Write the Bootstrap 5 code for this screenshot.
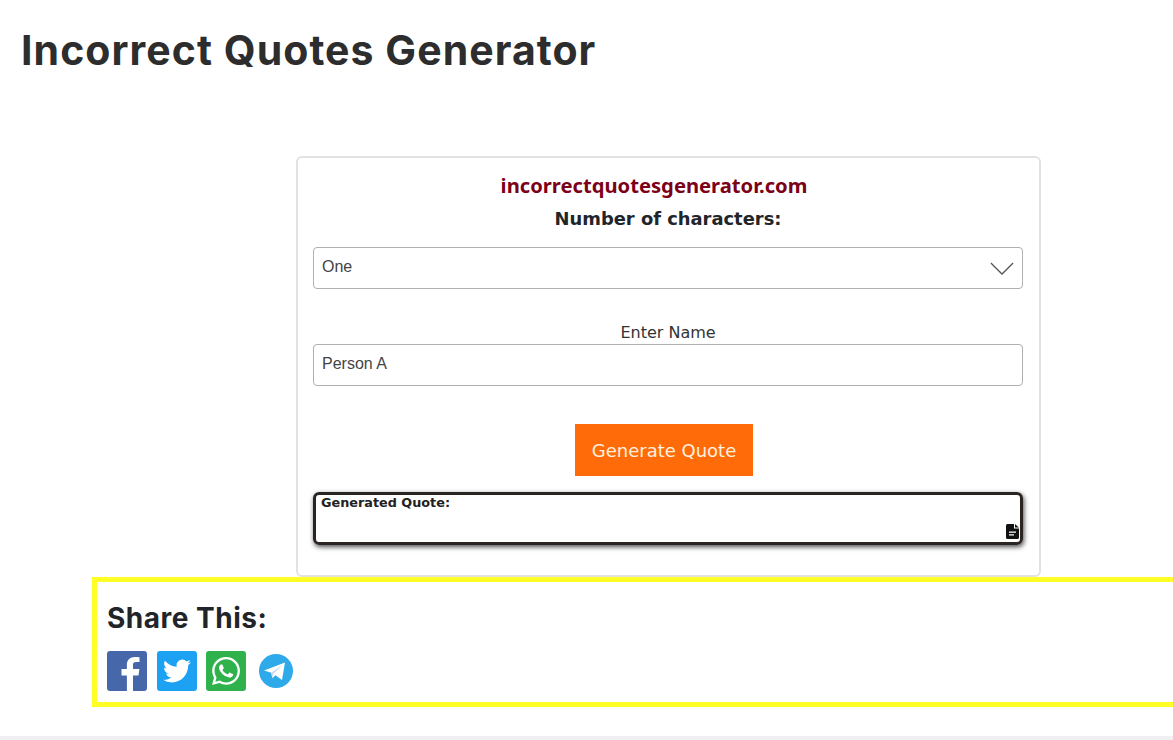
<!DOCTYPE html>
<html lang="en">

<head>
    <meta charset="UTF-8">
    <meta name="viewport" content="width=device-width, initial-scale=1.0">
    <title>Incorrect Quotes Generator</title>
    <link href="https://cdn.jsdelivr.net/npm/bootstrap@5.3.0/dist/css/bootstrap.min.css" rel="stylesheet">
    <style>
        html, body { overflow: hidden; height: 740px; }
        body { font-family: "DejaVu Sans", sans-serif; color: #212529; }
        .page-title { font-family: Inter, sans-serif; font-weight: 700; font-size: 41px; line-height: 48px; color: #2d2d2d; margin: 0; padding: 26px 0 0 21px; letter-spacing: 1.05px; }
        .tool-card { width: 745px; height: 421px; margin: 82px 0 0 296px; border: 2px solid #e2e2e2; border-radius: 6px; padding: 13px 16px 0 15px; }
        .site-name { font-family: "Noto Sans", sans-serif; font-weight: 700; font-size: 20.2px; line-height: 28px; color: #7b0018; padding-right: 28px; }
        .count-label { font-weight: 700; font-size: 17.9px; line-height: 24px; margin-top: 8px; color: #212529; }
        .tool-field { font-family: "Liberation Sans", sans-serif; font-size: 16px; height: 42px; color: #444; border: 1px solid #b0b0b0; border-radius: 4px; padding: 0 8px 3px; }
        .tool-select { margin-top: 16px; background-size: 24px 15px; background-position: right 8px center; background-image: url("data:image/svg+xml,%3Csvg xmlns='http://www.w3.org/2000/svg' viewBox='0 0 26 16'%3E%3Cpath d='M1 2l12 12L25 2' fill='none' stroke='%23555' stroke-width='1.3'/%3E%3C/svg%3E"); }
        .name-label { font-size: 16px; line-height: 20px; margin: 34px 0 1px; color: #333; }
        .gen-btn { width: 178px; height: 52px; margin: 38px 0 0 262px; padding-top: 6px; background: #ff6b08; color: #fff0de; font-size: 18px; border: 0; border-radius: 0; display: block; }
        .gen-btn:hover { background: #ff6b08; color: #fff0de; }
        .quote-box { height: 53px; margin-top: 16px; border: 3px solid #2a2522; border-radius: 6px; box-shadow: 1px 2px 5px rgba(0, 0, 0, .7); padding: 1px 5px 0; }
        .quote-head { font-weight: 700; font-size: 12.8px; line-height: 14px; color: #222; }
        .quote-doc { position: absolute; right: 1px; bottom: 3px; }
        .share-box { height: 130px; margin: 0 -10px 0 92px; border: 5px solid #ffff26; padding: 20px 10px 0; }
        .share-title { font-family: Inter, sans-serif; font-weight: 700; font-size: 28px; line-height: 32px; letter-spacing: .5px; margin: 0 0 17px; color: #212529; }
        .share-icon { width: 40px; height: 40px; border-radius: 3px; }
        .share-glyph { padding: 6px; }
        .icon-fb { background: #4767ab; }
        .icon-tw { background: #1da1f2; margin-left: 10px; }
        .icon-wa { background: #2fb24c; margin-left: 9px; }
        .icon-tg { margin-left: 13px; }
        .page-rule { height: 4px; margin-top: 29px; background: #f0f0f2; }
    </style>
</head>

<body>
    <h1 class="page-title">Incorrect Quotes Generator</h1>

    <!-- Generator form -->
    <div class="tool-card">
        <div class="site-name text-center">incorrectquotesgenerator.com</div>
        <div class="count-label text-center">Number of characters:</div>
        <select class="form-select tool-field tool-select">
            <option>One</option>
        </select>
        <div class="name-label text-center">Enter Name</div>
        <input type="text" class="form-control tool-field" value="Person A">
        <button type="button" class="btn gen-btn">Generate Quote</button>
        <div class="quote-box position-relative">
            <div class="quote-head">Generated Quote:</div>
            <svg class="quote-doc" width="13" height="15" viewBox="0 0 13 15">
                <path d="M1.5 0H8v4.5h5v9a1.5 1.5 0 0 1-1.5 1.5h-10A1.5 1.5 0 0 1 0 13.500v-12A1.500 1.500 0 0 1 1.500 0z" fill="#111" />
                <path d="M9 0l4 3.500H9z" fill="#111" />
                <path d="M3 7.500h7v1.300H3zM3 10.300h5v1.300H3z" fill="#fff" />
            </svg>
        </div>
    </div>

    <!-- Share links -->
    <div class="share-box">
        <h2 class="share-title">Share This:</h2>
        <div class="d-flex align-items-center">
            <svg class="share-icon icon-fb" viewBox="0 0 40 40">
                <path d="M26 40V24.500h5.500l.9-6.500H26v-4c0-1.900.6-3 3.200-3h3.300V6.200c-.6-.1-2.500-.3-4.700-.3-4.700 0-7.900 2.800-7.900 7.900V18h-5.400v6.500h5.400V40z" fill="#fff" />
            </svg>
            <svg class="share-icon share-glyph icon-tw" viewBox="0 0 24 24">
                <path d="M23.953 4.57a10 10 0 01-2.825.775 4.958 4.958 0 002.163-2.723c-.951.555-2.005.959-3.127 1.184a4.92 4.92 0 00-8.384 4.482C7.69 8.095 4.067 6.13 1.64 3.162a4.822 4.822 0 00-.666 2.475c0 1.71.87 3.213 2.188 4.096a4.904 4.904 0 01-2.228-.616v.06a4.923 4.923 0 003.946 4.827 4.996 4.996 0 01-2.212.085 4.936 4.936 0 004.604 3.417 9.867 9.867 0 01-6.102 2.105c-.39 0-.779-.023-1.17-.067a13.995 13.995 0 007.557 2.209c9.053 0 13.998-7.496 13.998-13.985 0-.21 0-.42-.015-.63A9.935 9.935 0 0024 4.59z" fill="#fff" />
            </svg>
            <svg class="share-icon share-glyph icon-wa" viewBox="0 0 24 24">
                <path d="M17.472 14.382c-.297-.149-1.758-.867-2.03-.967-.273-.099-.471-.148-.67.15-.197.297-.767.966-.94 1.164-.173.199-.347.223-.644.075-.297-.15-1.255-.463-2.39-1.475-.883-.788-1.48-1.761-1.653-2.059-.173-.297-.018-.458.13-.606.134-.133.298-.347.446-.52.149-.174.198-.298.298-.497.099-.198.05-.371-.025-.52-.075-.149-.669-1.612-.916-2.207-.242-.579-.487-.5-.669-.51-.173-.008-.371-.01-.57-.01-.198 0-.52.074-.792.372-.272.297-1.04 1.016-1.04 2.479 0 1.462 1.065 2.875 1.213 3.074.149.198 2.096 3.2 5.077 4.487.709.306 1.262.489 1.694.625.712.227 1.36.195 1.871.118.571-.085 1.758-.719 2.006-1.413.248-.694.248-1.289.173-1.413-.074-.124-.272-.198-.57-.347m-5.421 7.403h-.004a9.87 9.87 0 01-5.031-1.378l-.361-.214-3.741.982.998-3.648-.235-.374a9.86 9.86 0 01-1.51-5.26c.001-5.45 4.436-9.884 9.888-9.884 2.64 0 5.122 1.03 6.988 2.898a9.825 9.825 0 012.893 6.994c-.003 5.45-4.437 9.884-9.885 9.884m8.413-18.297A11.815 11.815 0 0012.05 0C5.495 0 .16 5.335.157 11.892c0 2.096.547 4.142 1.588 5.945L.057 24l6.305-1.654a11.882 11.882 0 005.683 1.448h.005c6.554 0 11.89-5.335 11.893-11.893a11.821 11.821 0 00-3.48-8.413z" fill="#fff" />
            </svg>
            <svg class="icon-tg" width="34" height="34" viewBox="0 0 34 34">
                <circle cx="17" cy="17" r="17" fill="#2ea9e9" />
                <path d="M5 16.500L26 8.500 23 26l-6.500-4.800-3.200 3.100-1-5.500z" fill="#fff" />
                <path d="M12.300 18.800L24 10.500l-9.500 9.200-1.200 4.600z" fill="#c8daea" />
            </svg>
        </div>
    </div>
    <div class="page-rule"></div>

    <script src="https://cdn.jsdelivr.net/npm/bootstrap@5.3.0/dist/js/bootstrap.bundle.min.js"></script>
</body>

</html>
